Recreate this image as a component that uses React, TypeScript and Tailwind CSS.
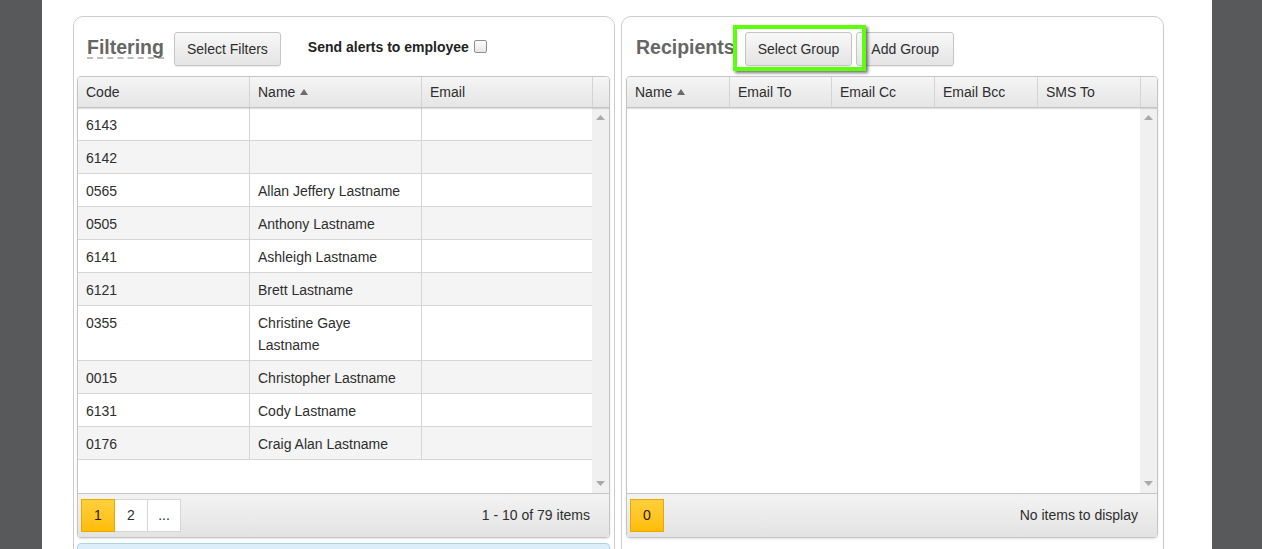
import React from "react";

const font = { fontFamily: '"Liberation Sans", Arial, sans-serif' };

function UpArrow() {
  return (
    <svg width="9" height="5" viewBox="0 0 9 5" className="block">
      <path d="M0 5 L4.5 0 L9 5 Z" fill="#a9a9a9" />
    </svg>
  );
}
function DownArrow() {
  return (
    <svg width="9" height="5" viewBox="0 0 9 5" className="block">
      <path d="M0 0 L9 0 L4.5 5 Z" fill="#a9a9a9" />
    </svg>
  );
}
function SortUp() {
  return (
    <svg width="8" height="6" viewBox="0 0 8 6" className="inline-block ml-[5px] mb-[2px]">
      <path d="M0 6 L4 0 L8 6 Z" fill="#6b6b6b" />
    </svg>
  );
}

function Button({ children, className = "", wide = false }: { children: React.ReactNode; className?: string; wide?: boolean }) {
  return (
    <div
      className={
        "h-[34px] flex items-center border border-[#c5c5c5] rounded-[3px] bg-gradient-to-b from-[#f8f8f8] to-[#e4e4e4] text-[14px] text-[#2e2e2e] shadow-[0_1px_1px_rgba(0,0,0,0.08)] whitespace-nowrap " +
        (wide ? "px-[14px] " : "px-[12px] ") +
        className
      }
    >
      {children}
    </div>
  );
}

type Col = { label: string; w: number; sort?: boolean };

function GridHeader({ cols }: { cols: Col[] }) {
  return (
    <div className="flex h-[31px] border-b border-[#c5c5c5] bg-gradient-to-b from-[#f5f5f5] to-[#e5e5e5] shadow-[0_1px_1px_rgba(0,0,0,0.12)] relative z-10">
      {cols.map((c, i) => (
        <div
          key={c.label}
          className={"flex items-center pt-[1px] px-[8px] text-[14px] text-[#2e2e2e] " + (i > 0 ? "border-l border-[#d3d3d3]" : "")}
          style={{ width: c.w }}
        >
          {c.label}
          {c.sort && <SortUp />}
        </div>
      ))}
      <div className="w-[17px] border-l border-[#d3d3d3]" />
    </div>
  );
}

function Scrollbar() {
  return (
    <div className="w-[17px] bg-[#f0f0f0] flex flex-col items-center justify-between pt-[7px] pb-[7px]">
      <UpArrow />
      <DownArrow />
    </div>
  );
}

function PagerBtn({ label, active, first }: { label: string; active?: boolean; first?: boolean }) {
  return (
    <div
      className={
        "w-[34px] h-[33px] flex items-center justify-center text-[14px] border " +
        (first ? "" : "-ml-px ") +
        (active
          ? "bg-gradient-to-b from-[#ffcf3a] to-[#ffbd00] border-[#e6a900] text-[#2b1a00] relative z-10"
          : "bg-white border-[#d6d6d6] text-[#2e2e2e]")
      }
    >
      {label}
    </div>
  );
}

function Footer({ pages, info }: { pages: { label: string; active?: boolean }[]; info: string }) {
  return (
    <div className="h-[44px] border-t border-[#c5c5c5] bg-gradient-to-b from-[#f3f3f3] to-[#e3e3e3] flex items-start pt-[5px] pl-[3px] pr-[19px]">
      <div className="flex">
        {pages.map((p, i) => (
          <PagerBtn key={i} label={p.label} active={p.active} first={i === 0} />
        ))}
      </div>
      <div className="ml-auto h-[33px] flex items-center text-[14px] text-[#2e2e2e]">{info}</div>
    </div>
  );
}

const employees: [string, string][] = [
  ["6143", ""],
  ["6142", ""],
  ["0565", "Allan Jeffery Lastname"],
  ["0505", "Anthony Lastname"],
  ["6141", "Ashleigh Lastname"],
  ["6121", "Brett Lastname"],
  ["0355", "Christine Gaye Lastname"],
  ["0015", "Christopher Lastname"],
  ["6131", "Cody Lastname"],
  ["0176", "Craig Alan Lastname"],
];

function EmployeeGrid() {
  const cols: Col[] = [
    { label: "Code", w: 171 },
    { label: "Name", w: 172, sort: true },
    { label: "Email", w: 171 },
  ];
  return (
    <div className="w-[533px] border border-[#c5c5c5] rounded-[4px] overflow-hidden shadow-[0_1px_2px_rgba(0,0,0,0.12)]">
      <GridHeader cols={cols} />
      <div className="flex h-[385px]">
        <div className="w-[514px] bg-white">
          {employees.map(([code, name], i) => (
            <div key={code} className={"flex border-b border-[#d5d5d5] " + (i % 2 === 1 ? "bg-[#f4f4f4]" : "bg-white")}>
              <div className="w-[171px] px-[8px] pt-[6px] pb-[4px] leading-[22px] text-[14px] text-[#2e2e2e]">{code}</div>
              <div className="w-[172px] border-l border-[#d5d5d5] px-[8px] pt-[6px] pb-[4px] leading-[22px] text-[14px] text-[#2e2e2e]">
                {name}
              </div>
              <div className="w-[171px] border-l border-[#d5d5d5] px-[8px] pt-[6px] pb-[4px] leading-[22px] text-[14px] text-[#2e2e2e]" />
            </div>
          ))}
        </div>
        <Scrollbar />
      </div>
      <Footer
        pages={[{ label: "1", active: true }, { label: "2" }, { label: "..." }]}
        info="1 - 10 of 79 items"
      />
    </div>
  );
}

function RecipientGrid() {
  const cols: Col[] = [
    { label: "Name", w: 102, sort: true },
    { label: "Email To", w: 102 },
    { label: "Email Cc", w: 103 },
    { label: "Email Bcc", w: 103 },
    { label: "SMS To", w: 103 },
  ];
  return (
    <div className="w-[532px] border border-[#c5c5c5] rounded-[4px] overflow-hidden shadow-[0_1px_2px_rgba(0,0,0,0.12)]">
      <GridHeader cols={cols} />
      <div className="flex h-[385px]">
        <div className="flex-1 bg-white" />
        <Scrollbar />
      </div>
      <Footer pages={[{ label: "0", active: true }]} info="No items to display" />
    </div>
  );
}

export default function App() {
  return (
    <div className="h-[549px] overflow-hidden bg-[#58595b] flex" style={font}>
      <div className="ml-[42px] w-[1170px] h-full bg-white flex items-start gap-[6px] pl-[31px] pt-[16px]">
        {/* Left panel */}
        <div className="w-[542px] h-[560px] border border-[#cccccc] rounded-[10px] pl-[3px] pr-[4px]">
          <div className="h-[59px] flex items-start pl-[10px]">
            <div className="mt-[20px] text-[19.5px] leading-[20px] font-bold text-[#666666] border-b-2 border-dashed border-[#bdbdbd]">
              Filtering
            </div>
            <Button className="mt-[15px] ml-[10px]">Select Filters</Button>
            <div className="ml-[27px] mt-[22px] flex items-center">
              <span className="text-[14px] leading-[16px] font-bold text-[#222222]">Send alerts to employee</span>
              <span className="ml-[5px] w-[13px] h-[13px] border border-[#8f8f8f] rounded-[2px] bg-gradient-to-b from-[#fdfdfd] to-[#e6e6e6] -mt-[2px]" />
            </div>
          </div>
          <EmployeeGrid />
          <div className="mt-[5px] w-[533px] h-[40px] border border-[#a9d6ee] rounded-[4px] bg-[#dbeef9]" />
        </div>

        {/* Right panel */}
        <div className="w-[543px] h-[560px] border border-[#cccccc] rounded-[10px] pl-[4px] pr-[5px]">
          <div className="h-[59px] flex items-start pl-[10px]">
            <div className="mt-[20px] text-[19.5px] leading-[20px] font-bold text-[#666666]">Recipients</div>
            <div className="relative mt-[15px] ml-[10px]">
              <Button>Select Group</Button>
              <div className="absolute -left-[12px] -right-[14px] -top-[7px] -bottom-[5px] border-4 border-[#5cff0c] shadow-[2px_2px_3px_rgba(0,0,0,0.55)] pointer-events-none z-20" />
            </div>
            <Button wide className="mt-[15px] ml-[4px]">Add Group</Button>
          </div>
          <RecipientGrid />
        </div>
      </div>
    </div>
  );
}
